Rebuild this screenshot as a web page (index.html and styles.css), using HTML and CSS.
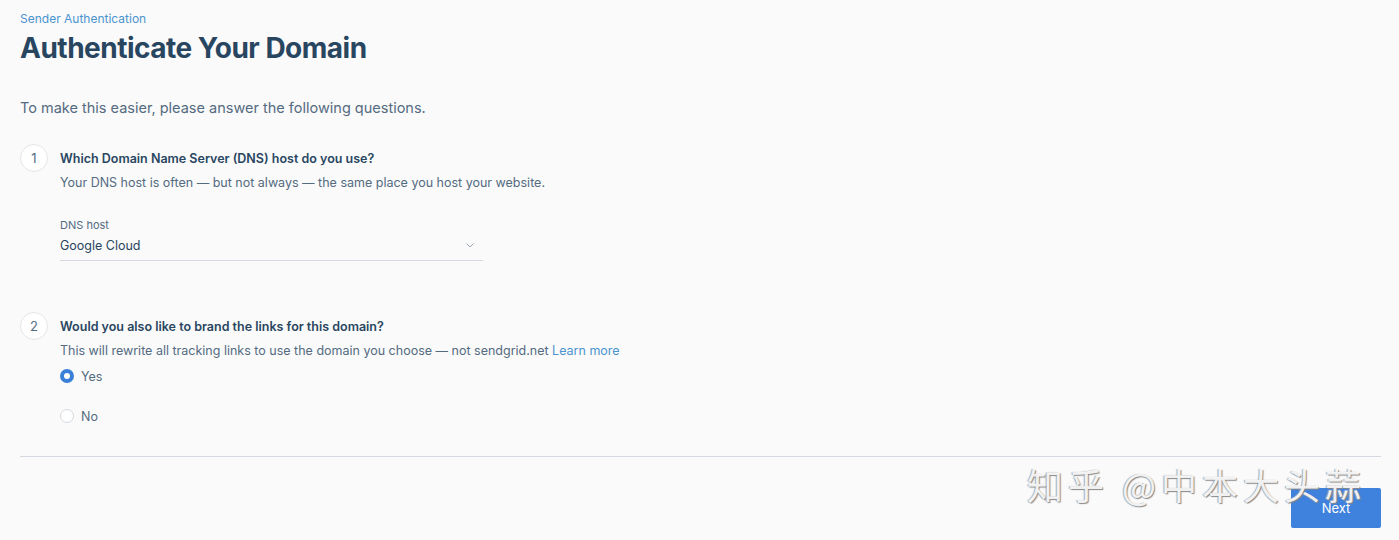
FILE: index.html
```html
<!DOCTYPE html>
<html>
<head>
<meta charset="utf-8">
<link rel="stylesheet" href="styles.css">
</head>
<body>
<div class="page">
  <div class="crumb">Sender Authentication</div>
  <h1 class="title">Authenticate Your Domain</h1>
  <p class="intro">To make this easier, please answer the following questions.</p>

  <div class="step step-1">
    <div class="num">1</div>
    <div class="step-body">
      <div class="q">Which Domain Name Server (DNS) host do you use?</div>
      <div class="help">Your DNS host is often — but not always — the same place you host your website.</div>
      <div class="field">
        <div class="label">DNS host</div>
        <div class="select">
          <span>Google Cloud</span>
          <svg class="caret" width="8" height="5" viewBox="0 0 8 5"><path d="M0.5 0.5 L4 4 L7.5 0.5" fill="none" stroke="#9aa5b1" stroke-width="1"/></svg>
        </div>
      </div>
    </div>
  </div>

  <div class="step step-2">
    <div class="num">2</div>
    <div class="step-body">
      <div class="q">Would you also like to brand the links for this domain?</div>
      <div class="help">This will rewrite all tracking links to use the domain you choose — not sendgrid.net <a class="link">Learn more</a></div>
      <div class="radio checked"><span class="dot"></span><span>Yes</span></div>
      <div class="radio"><span class="dot"></span><span>No</span></div>
    </div>
  </div>

  <div class="footer">
    <button class="next">Next</button>
  </div>
</div>
<div class="watermark">知乎 @中本大头蒜</div>
</body>
</html>
```
FILE: styles.css
```css
html, body {
  margin: 0;
  padding: 0;
  background: #fafafa;
  font-family: Inter, "Noto Sans", sans-serif;
  color: #294661;
}
.page {
  padding: 11px 18px 0 20px;
}
.crumb {
  font-size: 12px;
  color: #4a94cf;
  line-height: 15px;
}
.title {
  margin: 5px 0 0;
  font-size: 28px;
  line-height: 34px;
  font-weight: 700;
  letter-spacing: -0.5px;
  color: #294661;
}
.intro {
  margin: 33px 0 0;
  font-size: 14.5px;
  line-height: 20px;
  color: #546b81;
}
.step {
  display: flex;
  gap: 12px;
}
.step-1 { margin-top: 26px; }
.step-2 { margin-top: 51px; }
.num {
  width: 28px;
  height: 28px;
  border: 1px solid #e2e6ea;
  border-radius: 50%;
  box-sizing: border-box;
  display: flex;
  align-items: center;
  justify-content: center;
  font-size: 13px;
  color: #546b81;
  background: #fff;
  flex: none;
}
.step-body { padding-top: 7px; }
.q {
  font-size: 12.5px;
  font-weight: 600;
  line-height: 16px;
  color: #294661;
}
.help {
  margin-top: 7px;
  font-size: 12.5px;
  line-height: 18px;
  color: #546b81;
}
.link { color: #4a94cf; }
.field { margin-top: 26px; }
.label {
  font-size: 11px;
  line-height: 14px;
  color: #546b81;
}
.select {
  margin-top: 2px;
  width: 423px;
  height: 22px;
  border-bottom: 1px solid #d4dadf;
  display: flex;
  justify-content: space-between;
  align-items: center;
  font-size: 12.5px;
  color: #294661;
  padding-bottom: 4px;
  box-sizing: content-box;
}
.caret { margin-right: 9px; }
.radio {
  display: flex;
  align-items: center;
  gap: 7px;
  font-size: 12.5px;
  color: #546b81;
  height: 18px;
  margin-top: 7px;
}
.radio + .radio { margin-top: 22px; }
.dot {
  width: 14px;
  height: 14px;
  border-radius: 50%;
  box-sizing: border-box;
  border: 1px solid #d4dadf;
  background: #fff;
}
.radio.checked .dot {
  border: 4px solid #3b80d8;
  background: #fff;
}
.footer {
  margin-top: 31px;
  border-top: 1px solid #d4dadf;
  width: 1361px;
  display: flex;
  justify-content: flex-end;
  padding-top: 31px;
}
.next {
  width: 90px;
  height: 40px;
  border: none;
  border-radius: 2px;
  background: #3e82dd;
  color: #fff;
  font-family: Inter, "Noto Sans", sans-serif;
  font-size: 13px;
  padding: 0;
}
.watermark {
  position: absolute;
  left: 1027px;
  top: 462px;
  font-family: "Noto Sans CJK SC", sans-serif;
  font-size: 36px;
  line-height: 44px;
  color: rgba(255,255,255,0.9);
  text-shadow: 1px 1px 1px #888, -1px 0 1px #aaa;
  letter-spacing: 5px;
  white-space: nowrap;
}
```
